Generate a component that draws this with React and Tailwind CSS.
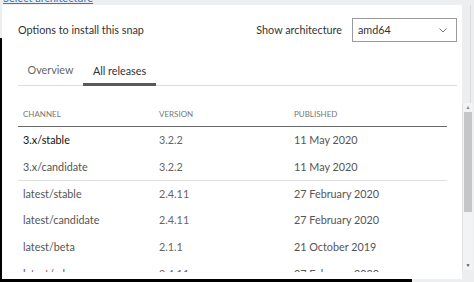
import React from "react"

const rows = [
  { channel: "3.x/stable", version: "3.2.2", date: "11 May 2020", strong: true },
  { channel: "3.x/candidate", version: "3.2.2", date: "11 May 2020", divider: true },
  { channel: "latest/stable", version: "2.4.11", date: "27 February 2020" },
  { channel: "latest/candidate", version: "2.4.11", date: "27 February 2020" },
  { channel: "latest/beta", version: "2.1.1", date: "21 October 2019" },
  { channel: "latest/edge", version: "2.4.11", date: "27 February 2020" },
]

const Chevron = () => (
  <svg width="8" height="5" viewBox="0 0 8 5" fill="none">
    <path d="M0.5 0.5l3.5 3.5 3.5-3.5" stroke="#777" strokeWidth="1" />
  </svg>
)

export default function App() {
  return (
    <div className="w-[474px] h-[282px] bg-[#eceeef] overflow-hidden flex flex-col text-[#333]" style={{ fontFamily: "Lato, 'Open Sans', sans-serif" }}>
      <div className="h-[5px] overflow-hidden pl-[3px]">
        <div className="-mt-[8px] text-[11px] leading-[12px] text-[#3a78c0] underline">Select architecture</div>
      </div>
      <div className="flex h-[274px]">
        <div className="w-[2px] flex flex-col">
          <div className="h-[33px]" />
          <div className="flex-1 bg-black" />
        </div>
        <div className="w-[460px] bg-white flex flex-col overflow-hidden">
          <div className="flex items-center h-[24px] mt-[13px] pl-[16px] pr-[5px]">
            <span className="text-[10.8px] text-[#333] grow">Options to install this snap</span>
            <span className="text-[10.8px] text-[#333] mr-[10px]">Show architecture</span>
            <div className="w-[105px] h-[24px] border border-[#9a9a9a] flex items-center justify-between pl-[5px] pr-[9px]">
              <span className="text-[10.8px] text-[#333]">amd64</span>
              <Chevron />
            </div>
          </div>
          <div className="mt-[14px] ml-[16px] mr-[5px] border-b border-[#dedede] flex h-[30px]">
            <div className="w-[65px] flex items-center justify-center text-[10.8px] text-[#666]">Overview</div>
            <div className="w-[73px] flex items-center justify-center text-[10.8px] text-[#333] border-b-[3px] border-[#5a5a5a] -mb-[1px] pt-[3px]">All releases</div>
          </div>
          <div className="ml-[16px] mr-[15px] mt-[15px] h-[171px] overflow-hidden">
            <div className="flex h-[26px] items-center border-b-[1.5px] border-[#6a6a6a] text-[8px] text-[#777]">
              <span className="w-[136px] pl-[5px]">CHANNEL</span>
              <span className="w-[135px] pl-[5px]">VERSION</span>
              <span className="pl-[5px]">PUBLISHED</span>
            </div>
            {rows.map((r) => (
              <div key={r.channel} className={`flex items-center text-[10.8px] ${r.divider ? "h-[27px] border-b border-[#e0e0e0]" : "h-[26.6px]"}`}>
                <span className={`w-[136px] pl-[5px] ${r.strong ? "text-[#111]" : "text-[#555]"}`}>{r.channel}</span>
                <span className="w-[135px] pl-[5px] text-[#666]">{r.version}</span>
                <span className="pl-[5px] text-[#555]">{r.date}</span>
              </div>
            ))}
          </div>
        </div>
        <div className="w-[12px] flex flex-col">
          <div className="h-[98px] flex justify-end pr-[3px]">
            <div className="w-px h-full bg-[#dcdcdc]" />
          </div>
          <div className="w-[11px] h-[167px] bg-[#f3f3f3] border-l border-[#e2e2e2] flex flex-col items-center">
            <div className="h-[9px] text-[5px] leading-[9px] text-[#8a8a8a]">▲</div>
            <div className="w-[8px] h-[100px] bg-[#c6c6c6]" />
            <div className="grow" />
            <div className="h-[9px] text-[5px] leading-[9px] text-[#555]">▼</div>
          </div>
        </div>
      </div>
      <div className="flex h-[3px]">
        <div className="w-[412px] bg-black" />
      </div>
    </div>
  )
}
